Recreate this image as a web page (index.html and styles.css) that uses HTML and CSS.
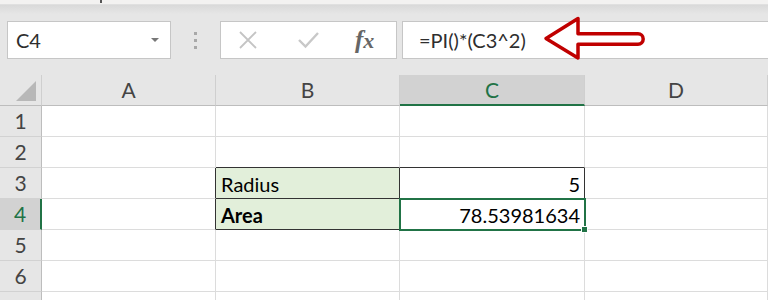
FILE: index.html
```html
<!DOCTYPE html>
<html lang="en">
<head>
  <meta charset="UTF-8">
  <meta name="viewport" content="width=device-width, initial-scale=1.0">
  <title>Area of a circle</title>
  <link rel="stylesheet" href="styles.css">
</head>
<body>
  <div class="top">
    <div class="strip"><span class="mark"></span></div>
    <div class="toolbar">
      <div class="namebox">
        <span>C4</span>
        <span class="caret"></span>
      </div>
      <div class="grip"><i></i><i></i><i></i></div>
      <div class="fnbox">
        <svg class="icon" width="20" height="18" viewBox="0 0 20 18">
          <path d="M2 1 L18 17 M18 1 L2 17" stroke="#c4c4c4" stroke-width="1.8" fill="none"/>
        </svg>
        <svg class="icon check" width="21" height="18" viewBox="0 0 21 18">
          <path d="M1 9 L7.5 15.5 L20 2" stroke="#c8c8c8" stroke-width="2.4" fill="none"/>
        </svg>
        <span class="fx"><i>f</i><i>x</i></span>
      </div>
      <div class="formula">=PI()*(C3^2)</div>
    </div>
    <!-- red callout arrow pointing at the formula -->
    <svg class="arrow" width="768" height="75" viewBox="0 0 768 75">
      <path d="M546 38.5 L578 18.5 L578 33.8 L638 33.8 A5.2 5.2 0 0 1 638 44.2 L578 44.2 L578 58 Z"
            fill="#fff" stroke="#c00000" stroke-width="3.5" stroke-linejoin="round"/>
    </svg>
  </div>

  <div class="sheet">
    <div class="cell hd corner"><span class="tri"></span></div>
    <div class="cell hd">A</div>
    <div class="cell hd">B</div>
    <div class="cell hd sel-col">C</div>
    <div class="cell hd">D</div>

    <div class="cell rh">1</div>
    <div class="cell"></div>
    <div class="cell"></div>
    <div class="cell"></div>
    <div class="cell"></div>

    <div class="cell rh">2</div>
    <div class="cell"></div>
    <div class="cell edge-b"></div>
    <div class="cell edge-b"></div>
    <div class="cell"></div>

    <div class="cell rh">3</div>
    <div class="cell edge-r"></div>
    <div class="cell box fill">Radius</div>
    <div class="cell box num">5</div>
    <div class="cell"></div>

    <div class="cell rh sel-row">4</div>
    <div class="cell edge-r"></div>
    <div class="cell box fill bold">Area</div>
    <div class="cell box num active">78.53981634</div>
    <div class="cell"></div>

    <div class="cell rh">5</div>
    <div class="cell"></div>
    <div class="cell"></div>
    <div class="cell"></div>
    <div class="cell"></div>

    <div class="cell rh">6</div>
    <div class="cell"></div>
    <div class="cell"></div>
    <div class="cell"></div>
    <div class="cell"></div>

    <div class="cell rh"></div>
    <div class="cell"></div>
    <div class="cell"></div>
    <div class="cell"></div>
    <div class="cell"></div>
  </div>
</body>
</html>
```

FILE: styles.css
```css
body{
  margin: 0;
  width: 768px;
  height: 300px;
  overflow: hidden;
  background: #fff;
  font-family: Lato, "Noto Sans", sans-serif;
  color: #000;
}

.top{
  position: relative;
}

.strip{
  height: 4px;
  background: #f3f2f1;
  border-bottom: 1px solid #e0e0e0;
}

.mark{
  display: block;
  width: 2px;
  height: 3px;
  margin-left: 100px;
  background: #555;
}

.toolbar{
  height: 70px;
  box-sizing: border-box;
  padding: 16px 0 0 7px;
  display: flex;
  align-items: flex-start;
  background: linear-gradient(#d9d9d9, #e6e6e6 9px);
}

.namebox, .fnbox, .formula{
  height: 38px;
  box-sizing: border-box;
  border: 1px solid #c6c6c6;
  background: #fff;
}

.namebox{
  width: 164px;
  display: flex;
  align-items: center;
  justify-content: space-between;
  padding: 0 11px 0 8px;
  font-size: 20px;
  line-height: 36px;
  color: #2e2e2e;
}

.caret{
  width: 0;
  height: 0;
  border-left: 4px solid transparent;
  border-right: 4px solid transparent;
  border-top: 4px solid #777;
}

.grip{
  width: 49px;
  height: 38px;
  display: flex;
  flex-direction: column;
  align-items: center;
  justify-content: center;
  gap: 4px;
}

.grip i{
  display: block;
  width: 3px;
  height: 3px;
  background: #a8a8a8;
}

.fnbox{
  width: 177px;
  display: flex;
  align-items: center;
  padding-left: 17px;
}

.icon{
  display: block;
}

.check{
  margin-left: 40px;
}

.fx{
  margin-left: 36px;
  font-family: "Liberation Serif", serif;
  font-size: 25px;
  font-weight: bold;
  color: #666;
  line-height: 36px;
}

.fx i + i{
  font-size: 22px;
}

.formula{
  flex: 1;
  margin-left: 5px;
  border-right: none;
  padding-left: 16px;
  font-size: 20px;
  line-height: 36px;
  color: #2e2e2e;
}

.arrow{
  position: absolute;
  left: 0;
  top: 0;
}

/* worksheet */
.sheet{
  display: grid;
  grid-template-columns: 42px 174px 184px 185px 1fr;
  grid-template-rows: repeat(8, 31px);
}

.cell{
  box-sizing: border-box;
  border-right: 1px solid #dcdcdc;
  border-bottom: 1px solid #dcdcdc;
  padding: 4px 5px 0;
  font-size: 20px;
  line-height: 24px;
  white-space: nowrap;
  overflow: hidden;
}

.hd, .rh{
  background: #e6e6e6;
  color: #444;
  text-align: center;
  font-size: 21px;
  line-height: 30px;
  padding: 0;
}

.hd{
  border-right-color: #cfcfcf;
  border-bottom-color: #bdbdbd;
}

.rh{
  border-right-color: #bdbdbd;
  border-bottom-color: #d2d2d2;
}

.corner{
  display: flex;
  justify-content: flex-end;
  align-items: flex-end;
  padding: 0 5px 4px 0;
}

.tri{
  width: 20px;
  height: 20px;
  background: #b8b8b8;
  clip-path: polygon(100% 0, 100% 100%, 0 100%);
}

.sel-col{
  background: #d2d2d2;
  color: #217346;
  border-bottom: 2px solid #217346;
}

.sel-row{
  background: #d2d2d2;
  color: #217346;
  border-right: 2px solid #217346;
}

.box{
  border-right-color: #333;
  border-bottom-color: #333;
}

.edge-r{
  border-right-color: #333;
}

.edge-b{
  border-bottom-color: #333;
}

.fill{
  background: #e2efda;
}

.bold{
  font-weight: bold;
}

.num{
  text-align: right;
  padding-right: 4px;
}

.active{
  position: relative;
  overflow: visible;
}

.active::after{
  content: "";
  position: absolute;
  left: -1px;
  top: -1px;
  right: -2px;
  bottom: -2px;
  border: 2px solid #217346;
}

.active::before{
  content: "";
  position: absolute;
  right: -4px;
  bottom: -4px;
  width: 5px;
  height: 5px;
  background: #217346;
  border: 1px solid #fff;
  z-index: 1;
}
```
